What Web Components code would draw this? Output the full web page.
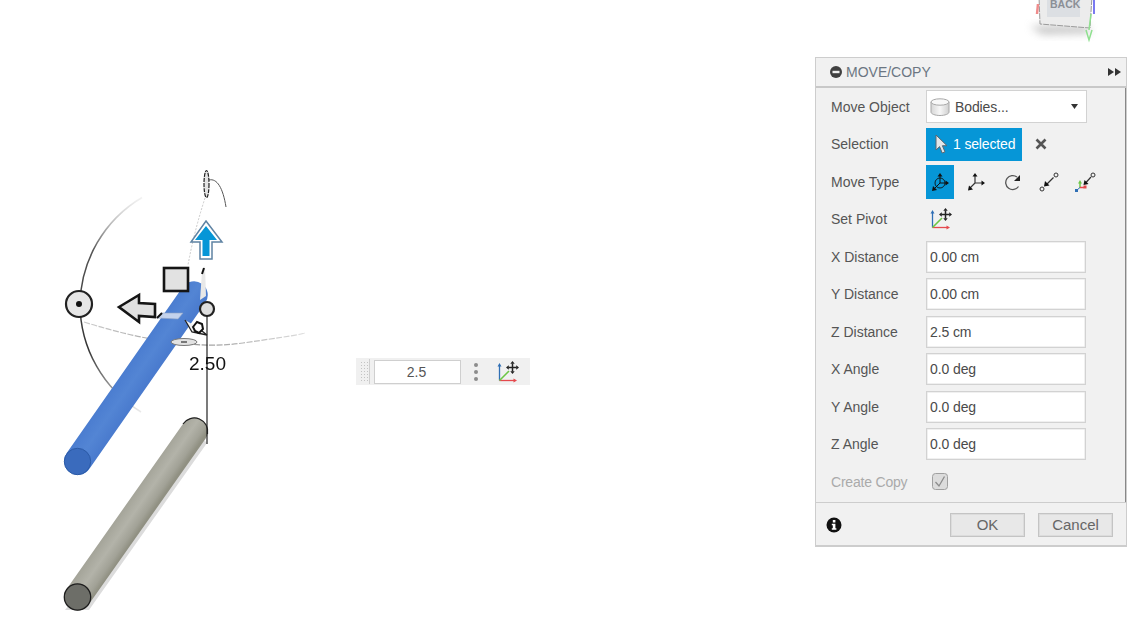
<!DOCTYPE html>
<html lang="en">
<head>
<meta charset="utf-8">
<title>Move/Copy</title>
<style>
  html, body { margin: 0; background: #fff; }
  body { font-family: "Liberation Sans", Arial, sans-serif; overflow: hidden; }
</style>
</head>
<body>
<cad-workspace>
  <cad-model slot="canvas"></cad-model>
  <view-cube slot="canvas"></view-cube>
  <value-bar slot="canvas" value="2.5"></value-bar>
  <move-panel slot="panel" heading="MOVE/COPY">
    <panel-row label="Move Object"><object-select>Bodies...</object-select></panel-row>
    <panel-row label="Selection"><selection-chip>1 selected</selection-chip></panel-row>
    <panel-row label="Move Type"><type-picker></type-picker></panel-row>
    <panel-row label="Set Pivot"><pivot-icon></pivot-icon></panel-row>
    <panel-row label="X Distance"><text-field>0.00 cm</text-field></panel-row>
    <panel-row label="Y Distance"><text-field>0.00 cm</text-field></panel-row>
    <panel-row label="Z Distance"><text-field>2.5 cm</text-field></panel-row>
    <panel-row label="X Angle"><text-field>0.0 deg</text-field></panel-row>
    <panel-row label="Y Angle"><text-field>0.0 deg</text-field></panel-row>
    <panel-row label="Z Angle"><text-field>0.0 deg</text-field></panel-row>
    <panel-row label="Create Copy" disabled><check-box></check-box></panel-row>
  </move-panel>
</cad-workspace>

<script>
// small axis triad with the move cross, used by the panel and the value bar
const pivotSvg = /* html */ `
  <svg width="24" height="24" viewBox="0 0 24 24" fill="none">
    <path d="M3.500 20.500V6" stroke="#2f6fb5" stroke-width="1.300"/>
    <path d="M3.500 3l-2 3.500h4z" fill="#2f6fb5"/>
    <path d="M3.500 20.500H18" stroke="#e5484d" stroke-width="1.300"/>
    <path d="M21 20.500l-3.500-2v4z" fill="#e5484d"/>
    <path d="M3.500 20.500L13 11" stroke="#6cc644" stroke-width="1.600"/>
    <path d="M16.500 3.500v8M12.500 7.500h8" stroke="#222" stroke-width="1.500"/>
    <path d="M16.500 1l-2.200 2.800h4.400zM16.500 14l-2.200-2.800h4.400zM10 7.500l2.800-2.200v4.400zM23 7.500l-2.800-2.200v4.400z" fill="#222"/>
  </svg>`;

class CadWorkspace extends HTMLElement {
  constructor() {
    super();
    this.attachShadow({ mode: "open" });
    this.shadowRoot.innerHTML = /* html */ `
      <style>
        :host {
          display: grid;
          grid-template-columns: 1fr 312px;
          width: 1132px;
          height: 630px;
          position: relative;
        }
        .canvas { position: absolute; inset: 0; }
        .side {
          grid-column: 2;
          position: relative;
          padding-top: 57px;
          margin-left: -5px;
          margin-right: 5px;
        }
      </style>
      <div class="canvas"><slot name="canvas"></slot></div>
      <div class="side"><slot name="panel"></slot></div>
    `;
  }
}

class CadModel extends HTMLElement {
  constructor() {
    super();
    this.attachShadow({ mode: "open" });
    this.shadowRoot.innerHTML = /* html */ `
      <style>
        :host { position: absolute; left: 0; top: 0; width: 400px; height: 630px; display: block; }
        svg { display: block; filter: blur(0.4px); }
        text { font-family: "Liberation Sans", Arial, sans-serif; font-size: 19px; fill: #111; }
      </style>
      <svg width="400" height="630" viewBox="0 0 400 630" fill="none">
        <defs>
          <linearGradient id="blue" gradientUnits="userSpaceOnUse" x1="66.800" y1="453.600" x2="88.200" y2="468.400">
            <stop offset="0" stop-color="#4b7dd0"/>
            <stop offset=".5" stop-color="#5385d4"/>
            <stop offset="1" stop-color="#4a7bce"/>
          </linearGradient>
          <linearGradient id="steel" gradientUnits="userSpaceOnUse" x1="66.800" y1="589.600" x2="88.200" y2="604.400">
            <stop offset="0" stop-color="#a4a499"/>
            <stop offset=".45" stop-color="#b3b3a9"/>
            <stop offset=".8" stop-color="#a2a297"/>
            <stop offset="1" stop-color="#909082"/>
          </linearGradient>
          <linearGradient id="ringFade" gradientUnits="userSpaceOnUse" x1="0" y1="195" x2="0" y2="415">
            <stop offset="0" stop-color="#ccc" stop-opacity=".2"/>
            <stop offset=".25" stop-color="#555"/>
            <stop offset=".7" stop-color="#333"/>
            <stop offset=".88" stop-color="#999"/>
            <stop offset="1" stop-color="#ccc" stop-opacity=".3"/>
          </linearGradient>
          <linearGradient id="floorFade" gradientUnits="userSpaceOnUse" x1="84" y1="0" x2="304" y2="0">
            <stop offset="0" stop-color="#ccc"/>
            <stop offset=".5" stop-color="#999"/>
            <stop offset="1" stop-color="#ddd"/>
          </linearGradient>
        </defs>

        <!-- rotation rings -->
        <path d="M142 197.500A127 127 0 0 0 80 304A127 127 0 0 0 141 412" stroke="url(#ringFade)" stroke-width="1.500"/>
        <path d="M84 322Q180 352 243 343T304 333" stroke="url(#floorFade)" stroke-width="1.200" stroke-dasharray="6 1.500"/>
        <path d="M205 198Q194 232 188 265" stroke="#bbb" stroke-width=".8" stroke-dasharray="2 1.500"/>
        <path d="M209 180C217 178 223 188 226 207" stroke="#555" stroke-width="1"/>
        <ellipse cx="206.500" cy="184" rx="2.500" ry="13.500" fill="#e4e4e4" stroke="#222" stroke-width="1.200" stroke-dasharray="4 1"/>

        <!-- moved body -->
        <line x1="78" y1="461" x2="194" y2="295" stroke="url(#blue)" stroke-width="27.500" stroke-linecap="round"/>
        <circle cx="77.500" cy="461.500" r="13.200" fill="#3a6bbd" stroke="#2b5aa6" stroke-width="1"/>

        <!-- original body -->
        <path d="M65 610L89 610L207 443L200 436Z" fill="#dcdcdc"/>
        <line x1="77.500" y1="597" x2="194.500" y2="431" stroke="url(#steel)" stroke-width="27" stroke-linecap="round"/>
        <path d="M183 424A13.500 13.500 0 0 1 207.500 434" stroke="#222" stroke-width="1.200"/>
        <circle cx="77.500" cy="597" r="13.200" fill="#6d6e68" stroke="#1d1d1d" stroke-width="1.300"/>

        <!-- gizmo handles -->
        <path d="M207 316V444" stroke="#222" stroke-width="1.200"/>
        <path d="M202 272L205 266L206 296L200 300Z" fill="#e8e8e8"/>
        <path d="M202 274L204 268" stroke="#111" stroke-width="2"/>
        <rect x="164" y="268" width="24" height="23" fill="#e2e2e2" stroke="#151515" stroke-width="2.600"/>
        <path d="M119 307L139 295V303L155 304V317L139 316V322Z" fill="#e0e0e0" stroke="#151515" stroke-width="2.600"/>
        <path d="M206 221L222 242H212V259H200V242H191Z" fill="#fff" stroke="#5f83a3" stroke-width="1.500"/>
        <path d="M206 226L217 240H209.500V256H202.500V240H195Z" fill="#0696d7"/>
        <circle cx="79" cy="304" r="13" fill="#e6e6e6" stroke="#222" stroke-width="2.200"/>
        <circle cx="79" cy="304" r="3" fill="#111"/>
        <circle cx="207" cy="309" r="7" fill="#dedede" stroke="#222" stroke-width="2.200"/>
        <path d="M157 318L162 313L183 313L178 319Z" fill="#c3d2ec" stroke="#8fa3c4" stroke-width=".6"/>
        <path d="M157 318L162 313" stroke="#111" stroke-width="2"/>
        <path d="M185 320L192 332L207 335L197 327" fill="#f1f1f1" stroke="#222" stroke-width="1.300"/>
        <path d="M193 327L197 322L202 324L203 329L199 333L195 331Z" fill="#fff" stroke="#111" stroke-width="2"/>
        <ellipse cx="184" cy="342" rx="13" ry="3.500" fill="#e2e2e2" stroke="#777" stroke-width="1"/>
        <path d="M181 342h6" stroke="#333" stroke-width="1.200"/>

        <text x="189" y="370">2.50</text>
      </svg>
    `;
  }
}

class ViewCube extends HTMLElement {
  constructor() {
    super();
    this.attachShadow({ mode: "open" });
    this.shadowRoot.innerHTML = /* html */ `
      <style>
        :host { position: absolute; left: 1010px; top: 0; width: 100px; height: 50px; display: block; }
        svg { display: block; }
        text { font-family: "Liberation Sans", Arial, sans-serif; font-size: 10.500px; font-weight: 700; fill: #8b8f96; }
      </style>
      <svg width="100" height="50" viewBox="0 0 100 50" fill="none">
        <defs>
          <filter id="soft" x="-40%" y="-80%" width="180%" height="260%"><feGaussianBlur stdDeviation="4"/></filter>
          <filter id="tiny" x="-10%" y="-10%" width="120%" height="120%"><feGaussianBlur stdDeviation=".5"/></filter>
        </defs>
        <path d="M20 26L78 26L80 33L32 34Z" fill="#999" opacity=".6" filter="url(#soft)"/>
        <g filter="url(#tiny)">
          <path d="M29 -4H82L80 28L30 24Z" fill="#ececec" stroke="#9a9a9a" stroke-width="1" stroke-dasharray="6 1"/>
          <rect x="37" y="-4" width="33" height="21" fill="#dcdfe3"/>
          <path d="M28 4L27 14" stroke="#ef8c8c" stroke-width="2.500"/>
          <path d="M84 0V14" stroke="#7a7af0" stroke-width="2"/>
          <path d="M81 14L79 30" stroke="#8fe08f" stroke-width="1.500"/>
          <path d="M76 30L79 40L82 30" stroke="#8fe08f" stroke-width="1.500"/>
        </g>
        <text x="40" y="8">BACK</text>
      </svg>
    `;
  }
}

class ValueBar extends HTMLElement {
  static observedAttributes = ["value"];

  constructor() {
    super();
    this.attachShadow({ mode: "open" });
  }

  connectedCallback() {
    this.render();
  }

  attributeChangedCallback() {
    this.render();
  }

  render() {
    this.shadowRoot.innerHTML = /* html */ `
      <style>
        :host {
          position: absolute;
          left: 356px;
          top: 358px;
          width: 174px;
          height: 27px;
          display: flex;
          align-items: center;
          background: #f0f0f0;
          font-size: 14px;
          color: #555;
        }
        .grip {
          width: 8px;
          height: 22px;
          margin-left: 4px;
          background-image: radial-gradient(#c4c4c4 0.7px, transparent 0.8px);
          background-size: 3px 3px;
        }
        .sep { width: 1px; height: 25px; margin-left: 1px; background: #cfcfcf; }
        .value {
          width: 87px;
          height: 24px;
          margin-left: 4px;
          padding-right: 2px;
          box-sizing: border-box;
          display: grid;
          place-items: center;
          background: #fff;
          border: 1px solid #cfcfcf;
        }
        .more { display: grid; gap: 3px; margin-left: 13px; }
        .more i { width: 4px; height: 4px; border-radius: 50%; background: #8c8c8c; display: block; }
        svg { display: block; margin-left: 18px; }
      </style>
      <span class="grip"></span>
      <span class="sep"></span>
      <span class="value">${this.getAttribute("value") || ""}</span>
      <span class="more"><i></i><i></i><i></i></span>
      ${pivotSvg}
    `;
  }
}

class MovePanel extends HTMLElement {
  static observedAttributes = ["heading"];

  constructor() {
    super();
    this.attachShadow({ mode: "open" });
  }

  connectedCallback() {
    this.render();
  }

  attributeChangedCallback() {
    this.render();
  }

  render() {
    this.shadowRoot.innerHTML = /* html */ `
      <style>
        :host {
          display: block;
          width: 312px;
          height: 490px;
          box-sizing: border-box;
          background: #f1f1f1;
          border: 1px solid #cdcdcd;
          border-bottom-width: 2px;
          font-size: 14px;
          color: #555;
        }
        header {
          height: 28px;
          display: flex;
          align-items: center;
          gap: 4px;
          padding-left: 14px;
          padding-right: 5px;
          border-bottom: 2px solid #c8c8c8;
          color: #6b7682;
        }
        .title { flex: 1; }
        .body { height: 414px; display: grid; grid-auto-rows: 37.5px; box-sizing: border-box; border-right: 1px solid #888; }
        footer {
          border-top: 1px solid #cdcdcd;
          height: 40px;
          padding: 2px 13px 0 10px;
          display: flex;
          align-items: center;
          gap: 13px;
        }
        footer svg { margin-right: auto; display: block; }
        button {
          height: 24px;
          width: 75px;
          padding: 0 0 2px;
          box-sizing: border-box;
          background: #e8e8e8;
          border: 1px solid #c4c4c4;
          box-shadow: inset 0 0 0 1px #dcdcdc;
          color: #666;
          font: inherit;
          font-size: 15px;
        }
      </style>
      <header>
        <svg width="12" height="12" viewBox="0 0 12 12"><circle cx="6" cy="6" r="6" fill="#404040"/><rect x="2.500" y="4.800" width="7" height="2.400" fill="#f0f0f0"/></svg>
        <span class="title">${this.getAttribute("heading") || ""}</span>
        <svg width="13" height="8" viewBox="0 0 13 8"><path d="M0 0l6 4-6 4zM7 0l6 4-6 4z" fill="#333"/></svg>
      </header>
      <div class="body"><slot></slot></div>
      <footer>
        <svg width="16" height="16" viewBox="0 0 16 16">
          <circle cx="8" cy="8" r="7.500" fill="#111"/>
          <rect x="6.800" y="3" width="2.600" height="2.500" fill="#fff"/>
          <path d="M5.800 6.800h3.600v4.400h1v1.500H5.800v-1.500h1V8.300h-1z" fill="#fff"/>
        </svg>
        <button type="button">OK</button>
        <button type="button">Cancel</button>
      </footer>
    `;
  }
}

class PanelRow extends HTMLElement {
  constructor() {
    super();
    this.attachShadow({ mode: "open" });
    this.shadowRoot.innerHTML = /* html */ `
      <style>
        :host {
          display: grid;
          grid-template-columns: 95px 1fr;
          align-items: center;
          padding-left: 15px;
          height: 37.5px;
          white-space: nowrap;
        }
        :host([disabled]) .label { color: #aaa; letter-spacing: -0.2px; }
        .control { display: flex; align-items: center; }
      </style>
      <span class="label"></span>
      <div class="control"><slot></slot></div>
    `;
  }

  connectedCallback() {
    this.shadowRoot.querySelector(".label").textContent = this.getAttribute("label") || "";
  }
}

class TextField extends HTMLElement {
  constructor() {
    super();
    this.attachShadow({ mode: "open" });
    this.shadowRoot.innerHTML = /* html */ `
      <style>
        :host {
          display: flex;
          align-items: center;
          width: 160px;
          height: 32px;
          box-sizing: border-box;
          padding-left: 3px;
          background: #fff;
          border: 1px solid #d2d2d2;
          box-shadow: inset 0 0 0 0.5px #e2e2e2;
          color: #4a4a4a;
          letter-spacing: -0.1px;
        }
      </style>
      <slot></slot>
    `;
  }
}

class ObjectSelect extends HTMLElement {
  constructor() {
    super();
    this.attachShadow({ mode: "open" });
    this.shadowRoot.innerHTML = /* html */ `
      <style>
        :host {
          display: flex;
          align-items: center;
          gap: 5px;
          width: 161px;
          height: 33px;
          box-sizing: border-box;
          padding: 0 8px 0 3px;
          background: #fff;
          border: 1px solid #d2d2d2;
          color: #4a4a4a;
          letter-spacing: -0.1px;
        }
        .text { flex: 1; }
        svg { display: block; }
      </style>
      <svg width="20" height="18" viewBox="0 0 20 18" fill="none">
        <defs><linearGradient id="can" x1="0" y1="0" x2="1" y2="0">
          <stop offset="0" stop-color="#d6d6d6"/><stop offset=".5" stop-color="#f7f7f7"/><stop offset="1" stop-color="#cfcfcf"/>
        </linearGradient></defs>
        <path d="M1 4v10c0 2 4 3.500 9 3.500s9-1.500 9-3.500V4z" fill="url(#can)" stroke="#a8a8a8"/>
        <ellipse cx="10" cy="4" rx="9" ry="3.200" fill="#f8f8f8" stroke="#a8a8a8"/>
      </svg>
      <span class="text"><slot></slot></span>
      <svg width="7" height="5" viewBox="0 0 7 5"><path d="M0 0h7L3.500 5z" fill="#333"/></svg>
    `;
  }
}

class SelectionChip extends HTMLElement {
  constructor() {
    super();
    this.attachShadow({ mode: "open" });
    this.shadowRoot.innerHTML = /* html */ `
      <style>
        :host { display: flex; align-items: center; gap: 13px; }
        .chip {
          display: flex;
          align-items: center;
          gap: 5px;
          width: 96px;
          height: 33px;
          box-sizing: border-box;
          padding-left: 9px;
          background: #0696d7;
          color: #fff;
          letter-spacing: -0.15px;
        }
        svg { display: block; }
      </style>
      <span class="chip">
        <svg width="13" height="20" viewBox="0 0 13 20"><path d="M1 1v15l3.600-3.400 2.600 6.400 2.800-1.100-2.600-6.200H12z" fill="#e2e6e9" stroke="#5c6770"/></svg>
        <slot></slot>
      </span>
      <svg width="12" height="12" viewBox="0 0 12 12"><path d="M1.500 1.500l9 9M10.500 1.500l-9 9" stroke="#555" stroke-width="2.600"/></svg>
    `;
  }
}

class TypePicker extends HTMLElement {
  constructor() {
    super();
    this.attachShadow({ mode: "open" });
    this.shadowRoot.innerHTML = /* html */ `
      <style>
        :host { display: flex; align-items: center; }
        .cell { width: 28px; height: 34px; display: grid; place-items: center; margin-right: 8px; }
        .on { background: #0696d7; }
        svg { display: block; }
      </style>
      <span class="cell on">
        <svg width="20" height="20" viewBox="0 0 20 20" fill="none">
          <circle cx="10" cy="11" r="5" stroke="#111" stroke-width=".9"/>
          <path d="M10 11V4M10 11h6M10 11L4 17" stroke="#111" stroke-width="1"/>
          <path d="M10 1L7.500 4.500h5zM19 11l-3.500-2.500v5zM2 19l1-5 4 4z" fill="#111"/>
        </svg>
      </span>
      <span class="cell">
        <svg width="20" height="20" viewBox="0 0 20 20" fill="none">
          <path d="M9 11V4M9 11h7M9 11L4 16" stroke="#333" stroke-width="1.200"/>
          <path d="M9 1L6.500 4.500h5zM19 11l-3.500-2.500v5zM2 18.500l1-5 4 4z" fill="#111"/>
        </svg>
      </span>
      <span class="cell" style="transform: translateX(1px)">
        <svg width="20" height="20" viewBox="0 0 20 20" fill="none">
          <path d="M15.500 14.500A7 7 0 1 1 14 5" stroke="#555" stroke-width="1.300"/>
          <path d="M17 3v6h-6z" fill="#222"/>
        </svg>
      </span>
      <span class="cell" style="transform: translateX(1px)">
        <svg width="20" height="20" viewBox="0 0 20 20" fill="none">
          <circle cx="17" cy="3" r="2" stroke="#333"/>
          <circle cx="3" cy="17" r="2" stroke="#333"/>
          <path d="M14.500 5.500L8 12" stroke="#333" stroke-width="1.200"/>
          <path d="M5 14.500l1-5.500 4.500 4.500z" fill="#111"/>
        </svg>
      </span>
      <span class="cell" style="transform: translateX(1px)">
        <svg width="22" height="20" viewBox="0 0 22 20" fill="none">
          <circle cx="19" cy="3" r="2" stroke="#333"/>
          <path d="M17 5l-5 5.500" stroke="#333" stroke-width="1.200"/>
          <path d="M9.500 13l1-5 4 4z" fill="#111"/>
          <path d="M6 16V11" stroke="#6cc644" stroke-width="1.500"/>
          <path d="M6 8L4 11.500h4z" fill="#6cc644"/>
          <path d="M6 15.500h4" stroke="#e5484d" stroke-width="1.500"/>
          <rect x="9.500" y="13.500" width="3" height="3" fill="#e5484d"/>
          <path d="M6 15.500L3 18" stroke="#2f6fb5"/>
          <rect x="1" y="17" width="3" height="3" fill="#2f6fb5"/>
        </svg>
      </span>
    `;
  }
}

class PivotIcon extends HTMLElement {
  constructor() {
    super();
    this.attachShadow({ mode: "open" });
    this.shadowRoot.innerHTML = /* html */ `
      <style>
        :host { display: block; margin-left: 3px; }
        svg { display: block; }
      </style>
      ${pivotSvg}
    `;
  }
}

class CheckBox extends HTMLElement {
  constructor() {
    super();
    this.attachShadow({ mode: "open" });
    this.shadowRoot.innerHTML = /* html */ `
      <style>
        :host { display: block; margin-left: 6px; }
        svg { display: block; }
      </style>
      <svg width="16" height="17" viewBox="0 0 16 17" fill="none">
        <rect x=".5" y=".5" width="15" height="16" rx="3" fill="#dcdcdc" stroke="#a0a0a0"/>
        <path d="M3.500 9l3.500 4L12.500 3.500" stroke="#8c8c8c" stroke-width="1.300"/>
      </svg>
    `;
  }
}

customElements.define("cad-workspace", CadWorkspace);
customElements.define("cad-model", CadModel);
customElements.define("view-cube", ViewCube);
customElements.define("value-bar", ValueBar);
customElements.define("move-panel", MovePanel);
customElements.define("panel-row", PanelRow);
customElements.define("text-field", TextField);
customElements.define("object-select", ObjectSelect);
customElements.define("selection-chip", SelectionChip);
customElements.define("type-picker", TypePicker);
customElements.define("pivot-icon", PivotIcon);
customElements.define("check-box", CheckBox);
</script>
</body>
</html>
